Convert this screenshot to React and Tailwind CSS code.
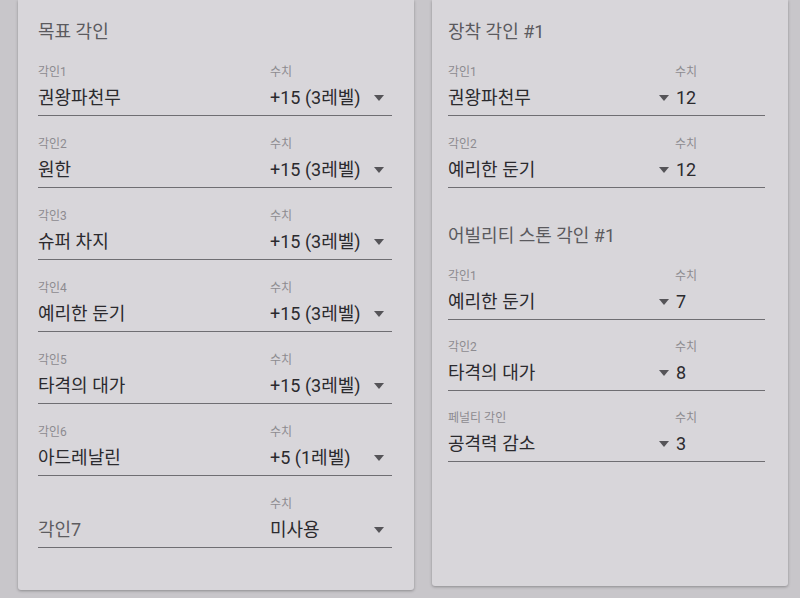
import React from "react";

const FONT = { fontFamily: 'Roboto, "Noto Sans CJK KR", sans-serif' };

function Caret() {
  return (
    <svg width="10" height="6" viewBox="0 0 10 6" className="shrink-0">
      <polygon points="0,0 10,0 5,6" fill="#555458" />
    </svg>
  );
}

// Field with the caret after the value (target engraving list)
function TargetField({ label, name, value, placeholder }) {
  return (
    <div className="flex border-b border-[#6f6e72] pb-[5px]">
      <div className="flex-1 flex flex-col">
        <div className="h-4 text-[12px] leading-4 text-[#8d8b90]">{label || "\u00a0"}</div>
        <div
          className={
            "mt-[6px] h-6 leading-6 text-[18px] " +
            (placeholder ? "text-[#5d5c60]" : "text-[#2b2a2e]")
          }
        >
          {name}
        </div>
      </div>
      <div className="w-[122px] flex flex-col">
        <div className="h-4 text-[12px] leading-4 text-[#8d8b90]">수치</div>
        <div className="mt-[6px] h-6 flex items-center justify-between pr-2">
          <span className="text-[18px] leading-6 text-[#2b2a2e]">{value}</span>
          <Caret />
        </div>
      </div>
    </div>
  );
}

// Field with the caret in front of the number (equipped engraving list)
function LevelField({ label, name, value }) {
  return (
    <div className="flex border-b border-[#6f6e72] pb-[5px]">
      <div className="flex-1 flex flex-col">
        <div className="h-4 text-[12px] leading-4 text-[#8d8b90]">{label}</div>
        <div className="mt-[6px] h-6 leading-6 text-[18px] text-[#2b2a2e]">{name}</div>
      </div>
      <div className="w-[109px] flex flex-col">
        <div className="h-4 pl-[19px] text-[12px] leading-4 text-[#8d8b90]">수치</div>
        <div className="mt-[6px] h-6 flex items-center pl-[3px] gap-[7px]">
          <Caret />
          <span className="text-[18px] leading-6 text-[#2b2a2e]">{value}</span>
        </div>
      </div>
    </div>
  );
}

export default function App() {
  const targets = [
    ["각인1", "권왕파천무", "+15 (3레벨)"],
    ["각인2", "원한", "+15 (3레벨)"],
    ["각인3", "슈퍼 차지", "+15 (3레벨)"],
    ["각인4", "예리한 둔기", "+15 (3레벨)"],
    ["각인5", "타격의 대가", "+15 (3레벨)"],
    ["각인6", "아드레날린", "+5 (1레벨)"],
  ];

  return (
    <div className="w-[800px] h-[598px] overflow-hidden bg-[#c8c6ca] flex gap-[18px] pl-[18px]" style={FONT}>
      <div className="w-[396px] h-[590px] bg-[#d8d6da] rounded-b-[3px] shadow-[0_1px_3px_rgba(0,0,0,0.3)] pl-[20px] pr-[22px] pt-[20px] flex flex-col">
        <div className="h-6 leading-6 text-[18px] text-[#5b5a5e]">목표 각인</div>
        <div className="mt-5 flex flex-col gap-5">
          {targets.map(([l, n, v]) => (
            <TargetField key={l} label={l} name={n} value={v} />
          ))}
          <TargetField label="" name="각인7" value="미사용" placeholder />
        </div>
      </div>

      <div className="w-[356px] h-[586px] bg-[#d8d6da] rounded-b-[3px] shadow-[0_1px_3px_rgba(0,0,0,0.3)] pl-4 pr-[23px] pt-[20px] flex flex-col">
        <div className="h-6 leading-6 text-[18px] text-[#5b5a5e]">장착 각인 #1</div>
        <div className="mt-5 flex flex-col gap-5">
          <LevelField label="각인1" name="권왕파천무" value="12" />
          <LevelField label="각인2" name="예리한 둔기" value="12" />
        </div>
        <div className="mt-9 h-6 leading-6 text-[18px] text-[#5b5a5e]">어빌리티 스톤 각인 #1</div>
        <div className="mt-5 flex flex-col gap-[19px]">
          <LevelField label="각인1" name="예리한 둔기" value="7" />
          <LevelField label="각인2" name="타격의 대가" value="8" />
          <LevelField label="페널티 각인" name="공격력 감소" value="3" />
        </div>
      </div>
    </div>
  );
}
